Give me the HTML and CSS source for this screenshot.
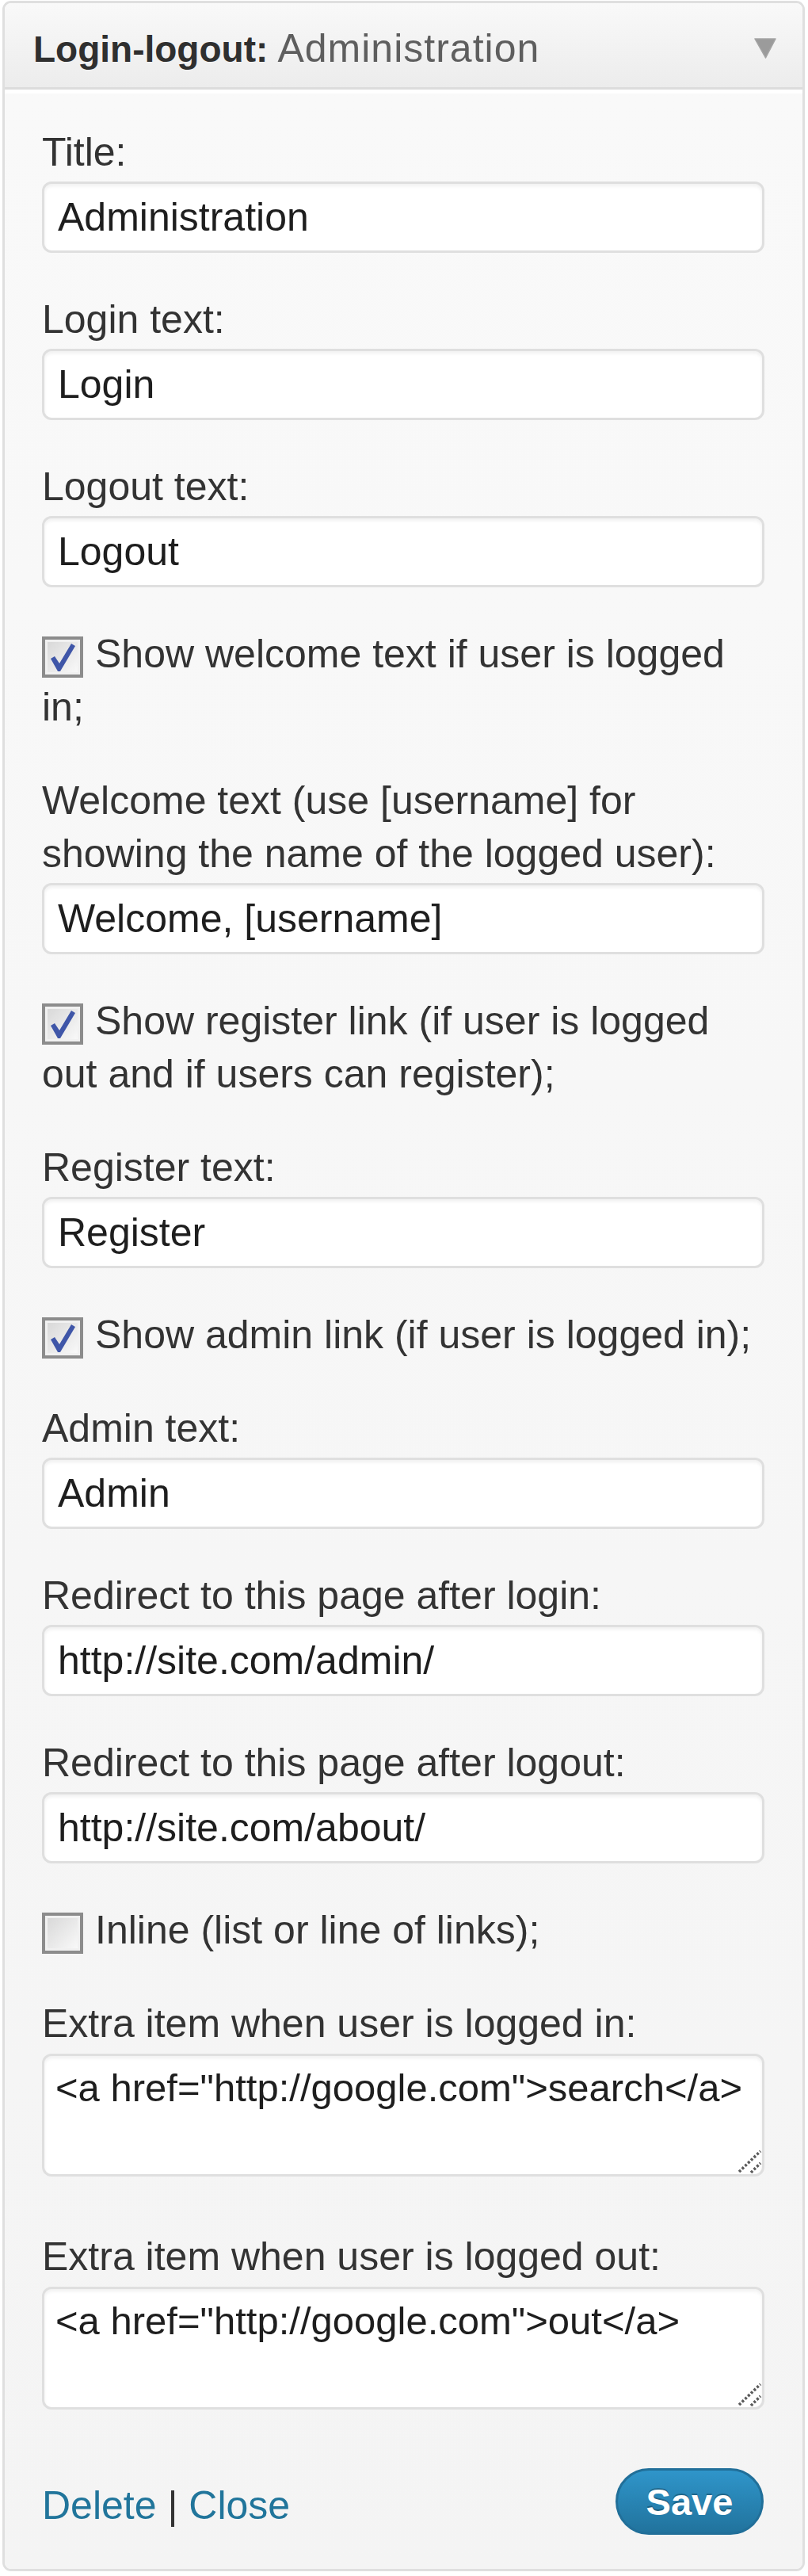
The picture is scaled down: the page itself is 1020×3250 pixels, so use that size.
FILE: index.html
```html
<!DOCTYPE html>
<html lang="en">
<head>
<meta charset="utf-8">
<title>Login-logout widget</title>
<link rel="stylesheet" href="styles.css">
</head>
<body>
<div class="widget">
  <div class="widget-top">
    <h4 class="widget-title">Login-logout:<span class="in-widget-title"> Administration</span></h4>
    <svg class="toggle" width="28" height="26" viewBox="0 0 28 26" aria-hidden="true"><path d="M1 1 H27 L14.5 25 Z" fill="#9b9b9b" stroke="#a5a5a5" stroke-width="1.5" stroke-linejoin="round"/></svg>
  </div>
  <div class="widget-inside">
    <div class="field">
      <label>Title:</label>
      <input type="text" value="Administration">
    </div>
    <div class="field">
      <label>Login text:</label>
      <input type="text" value="Login">
    </div>
    <div class="field">
      <label>Logout text:</label>
      <input type="text" value="Logout">
    </div>
    <label class="check"><span class="box"><svg viewBox="0 0 44 44" width="44" height="44" aria-hidden="true"><path d="M7 24 L12 21 L18 30 L33 5 L38 8 L19 40 L16 40 Z" fill="#3f56a8"/></svg></span>Show welcome text if user is logged in;</label>
    <div class="field">
      <label>Welcome text (use [username] for showing the name of the logged user):</label>
      <input type="text" value="Welcome, [username]">
    </div>
    <label class="check"><span class="box"><svg viewBox="0 0 44 44" width="44" height="44" aria-hidden="true"><path d="M7 24 L12 21 L18 30 L33 5 L38 8 L19 40 L16 40 Z" fill="#3f56a8"/></svg></span>Show register link (if user is logged out and if users can register);</label>
    <div class="field">
      <label>Register text:</label>
      <input type="text" value="Register">
    </div>
    <label class="check"><span class="box"><svg viewBox="0 0 44 44" width="44" height="44" aria-hidden="true"><path d="M7 24 L12 21 L18 30 L33 5 L38 8 L19 40 L16 40 Z" fill="#3f56a8"/></svg></span>Show admin link (if user is logged in);</label>
    <div class="field">
      <label>Admin text:</label>
      <input type="text" value="Admin">
    </div>
    <div class="field">
      <label>Redirect to this page after login:</label>
      <input type="text" value="http://site.com/admin/">
    </div>
    <div class="field">
      <label>Redirect to this page after logout:</label>
      <input type="text" value="http://site.com/about/">
    </div>
    <label class="check"><span class="box"></span>Inline (list or line of links);</label>
    <div class="field area">
      <label>Extra item when user is logged in:</label>
      <div class="ta-wrap">
        <textarea>&lt;a href="http://google.com"&gt;search&lt;/a&gt;</textarea>
        <svg class="grip" width="34" height="34" viewBox="0 0 34 34" aria-hidden="true"><path d="M3 29 L30 3 M18 30 L30 18" stroke="#5a5a5a" stroke-width="3.5" stroke-dasharray="3 2.2" fill="none"/></svg>
      </div>
    </div>
    <div class="field area last">
      <label>Extra item when user is logged out:</label>
      <div class="ta-wrap">
        <textarea>&lt;a href="http://google.com"&gt;out&lt;/a&gt;</textarea>
        <svg class="grip" width="34" height="34" viewBox="0 0 34 34" aria-hidden="true"><path d="M3 29 L30 3 M18 30 L30 18" stroke="#5a5a5a" stroke-width="3.5" stroke-dasharray="3 2.2" fill="none"/></svg>
      </div>
    </div>
    <div class="widget-control">
      <div class="links"><a href="#">Delete</a> | <a href="#">Close</a></div>
      <button class="save" type="button">Save</button>
    </div>
  </div>
</div>
</body>
</html>
```
FILE: styles.css
```css
* {
  box-sizing: border-box;
}

html,
body {
  margin: 0;
  padding: 0;
  background: #ffffff;
}

body {
  font-family: "Liberation Sans", Arial, sans-serif;
  color: #333333;
}

.widget {
  width: 1013px;
  margin: 1px 0 0 3px;
  border: 3px solid #dfdfdf;
  border-radius: 11px;
  overflow: hidden;
  background: #f9f9f9;
}

.widget-top {
  height: 109px;
  display: flex;
  align-items: center;
  justify-content: space-between;
  padding: 8px 33px 0 36px;
  border-bottom: 3px solid #dcdcdc;
  background: linear-gradient(#f9f9f9, #ececec);
}

.widget-title {
  margin: 0;
  font-size: 46px;
  font-weight: bold;
  line-height: 52px;
  color: #2f2f2f;
  white-space: nowrap;
}

.in-widget-title {
  font-size: 50px;
  font-weight: normal;
  letter-spacing: 1px;
  color: #5e5e5e;
}

.toggle {
  display: block;
  flex: none;
}

.widget-inside {
  padding: 46px 48px 43px 47px;
  background: linear-gradient(#f9f9f9, #f4f4f4);
  box-shadow: inset 0 5px 0 #ffffff;
}

.field {
  margin: 0 0 51px;
}

.field > label {
  display: block;
  font-size: 50px;
  line-height: 67px;
  color: #333333;
}

.field input,
.field textarea {
  display: block;
  width: 100%;
  margin: 3px 0 0;
  font-family: "Liberation Sans", Arial, sans-serif;
  font-size: 50px;
  color: #1e1e1e;
  background: #ffffff;
  border: 3px solid #dfdfdf;
  border-radius: 12px;
  box-shadow: inset 0 3px 4px rgba(0, 0, 0, 0.06);
  outline: none;
}

.field input {
  height: 90px;
  padding: 0 17px;
}

.field.area {
  margin-bottom: 68px;
}

.field.area.last {
  margin-bottom: 74px;
}

.ta-wrap {
  position: relative;
  margin-top: 4px;
}

.field textarea {
  margin: 0;
  height: 155px;
  padding: 11px 10px 11px 14px;
  font-size: 49px;
  line-height: 58px;
  white-space: pre;
  resize: none;
  overflow: hidden;
}

.grip {
  position: absolute;
  right: 1px;
  bottom: 1px;
}

.check {
  display: block;
  margin: 0 0 51px;
  font-size: 50px;
  line-height: 67px;
  color: #333333;
}

.box {
  display: inline-block;
  vertical-align: top;
  width: 52px;
  height: 52px;
  margin: 11px 15px 0 0;
  border: 4px solid #8c8c8c;
  background: linear-gradient(135deg, #d6d6d6, #fbfbfb);
  box-shadow: inset 0 0 0 3px #f1f1f1;
  position: relative;
}

.box svg {
  display: block;
}

.widget-control {
  display: flex;
  justify-content: space-between;
  align-items: flex-end;
}

.links {
  font-size: 50px;
  line-height: 67px;
  margin-bottom: 3px;
  color: #333333;
}

.links a {
  color: #21759b;
  text-decoration: none;
}

.save {
  width: 187px;
  height: 84px;
  margin: 0 1px 0 0;
  padding: 0;
  border: 3px solid #216f99;
  border-radius: 42px;
  background: linear-gradient(#2f95ca, #21739d);
  color: #ffffff;
  font-family: "Liberation Sans", Arial, sans-serif;
  font-size: 47px;
  font-weight: bold;
  text-shadow: 0 -2px 0 rgba(0, 0, 0, 0.25);
  cursor: pointer;
}
```
